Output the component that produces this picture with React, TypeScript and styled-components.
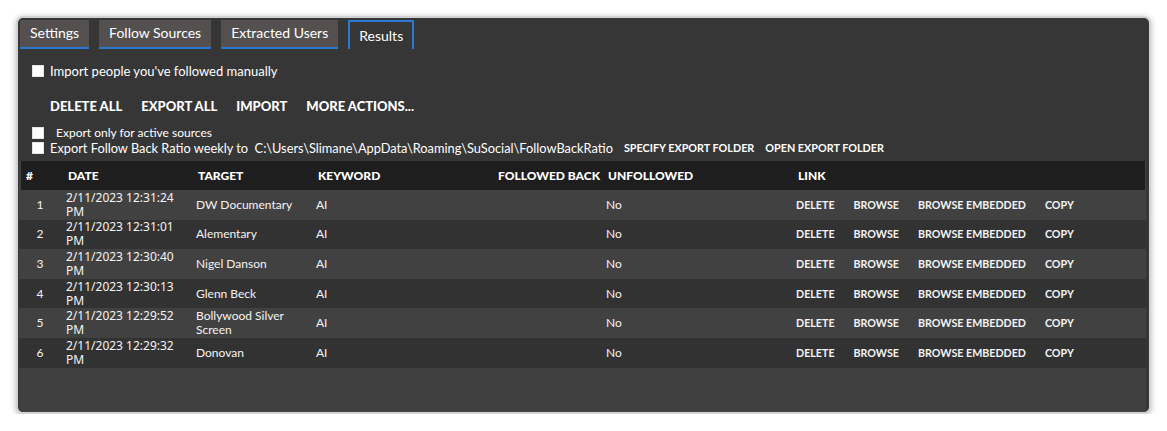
import React from "react"
import styled, { createGlobalStyle } from "styled-components"

const GlobalStyle = createGlobalStyle`
  html, body {
    margin: 0;
    padding: 0;
    background: #ffffff;
  }
  body {
    font-family: "Lato", "Liberation Sans", sans-serif;
    color: #ffffff;
  }
`

const BLUE = "#2c79d4"

type Result = {
  id: number
  date: string
  target: string
  keyword: string
  unfollowed: string
}

const RESULTS: Array<Result> = [
  { id: 1, date: "2/11/2023 12:31:24 PM", target: "DW Documentary", keyword: "AI", unfollowed: "No" },
  { id: 2, date: "2/11/2023 12:31:01 PM", target: "Alementary", keyword: "AI", unfollowed: "No" },
  { id: 3, date: "2/11/2023 12:30:40 PM", target: "Nigel Danson", keyword: "AI", unfollowed: "No" },
  { id: 4, date: "2/11/2023 12:30:13 PM", target: "Glenn Beck", keyword: "AI", unfollowed: "No" },
  { id: 5, date: "2/11/2023 12:29:52 PM", target: "Bollywood Silver Screen", keyword: "AI", unfollowed: "No" },
  { id: 6, date: "2/11/2023 12:29:32 PM", target: "Donovan", keyword: "AI", unfollowed: "No" },
]

const TABS = ["Settings", "Follow Sources", "Extracted Users", "Results"]
const ACTIONS = ["DELETE ALL", "EXPORT ALL", "IMPORT", "MORE ACTIONS..."]
const ROW_LINKS = ["DELETE", "BROWSE", "BROWSE EMBEDDED", "COPY"]
const COLUMNS = "42px 130px 120px 180px 110px 190px 1fr"

export default function App() {
  return (
    <>
      <GlobalStyle />
      <Window>
        <TabBar>
          {TABS.map((tab) => (
            <Tab key={tab} active={tab === "Results"}>
              {tab}
            </Tab>
          ))}
        </TabBar>

        <CheckRow top={14}>
          <Checkbox />
          <CheckLabel>Import people you've followed manually</CheckLabel>
        </CheckRow>

        <ActionBar>
          {ACTIONS.map((action) => (
            <ActionButton key={action}>{action}</ActionButton>
          ))}
        </ActionBar>

        <ExportOptions>
          <CheckRow>
            <Checkbox />
            <SmallLabel>Export only for active sources</SmallLabel>
          </CheckRow>
          <CheckRow>
            <Checkbox />
            <PathLabel>
              Export Follow Back Ratio weekly to&nbsp;
              C:\Users\Slimane\AppData\Roaming\SuSocial\FollowBackRatio
            </PathLabel>
            <FolderLink>SPECIFY EXPORT FOLDER</FolderLink>
            <FolderLink>OPEN EXPORT FOLDER</FolderLink>
          </CheckRow>
        </ExportOptions>

        <Table>
          <HeaderRow>
            <HeadCell>#</HeadCell>
            <HeadCell>DATE</HeadCell>
            <HeadCell>TARGET</HeadCell>
            <HeadCell>KEYWORD</HeadCell>
            <HeadCell>FOLLOWED BACK</HeadCell>
            <HeadCell>UNFOLLOWED</HeadCell>
            <HeadCell>LINK</HeadCell>
          </HeaderRow>
          {RESULTS.map((row, i) => (
            <Row key={row.id} striped={i % 2 === 1}>
              <NumberCell>{row.id}</NumberCell>
              <DateCell>
                <Wrap width={114}>{row.date}</Wrap>
              </DateCell>
              <Cell>
                <Wrap width={104}>{row.target}</Wrap>
              </Cell>
              <Cell>{row.keyword}</Cell>
              <Cell />
              <Cell>{row.unfollowed}</Cell>
              <LinkCell>
                {ROW_LINKS.map((link) => (
                  <RowLink key={link}>{link}</RowLink>
                ))}
              </LinkCell>
            </Row>
          ))}
        </Table>
      </Window>
    </>
  )
}

const Window = styled.div`
  box-sizing: border-box;
  margin: 16px 0 0 16px;
  width: 1135px;
  height: 398px;
  border: 2px solid #d3d3d3;
  border-radius: 7px;
  background: #363636;
  box-shadow: 0 1px 6px rgba(0, 0, 0, 0.28);
  display: flex;
  flex-direction: column;
  overflow: hidden;
`

const TabBar = styled.div`
  display: flex;
  gap: 10px;
  padding: 2px 0 0 2px;
`

const Tab = styled.div<{ active?: boolean }>`
  box-sizing: border-box;
  height: 29px;
  padding: ${({ active }) => (active ? "4px 9px 0" : "3px 10px 0")};
  font-size: 14px;
  line-height: 20px;
  color: #ffffff;
  background: ${({ active }) => (active ? "#363636" : "#54504f")};
  border-style: solid;
  border-color: ${BLUE};
  border-width: ${({ active }) => (active ? "2px 2px 0 2px" : "0 0 2px 0")};
`

const CheckRow = styled.div<{ top?: number }>`
  display: flex;
  align-items: center;
  height: 15px;
  margin-top: ${({ top }) => (top ? `${top}px` : "0")};
  padding-left: 14px;
`

const Checkbox = styled.span`
  box-sizing: border-box;
  width: 12px;
  height: 12px;
  background: #ffffff;
  border: 1px solid #e4e4e4;
  flex-shrink: 0;
`

const CheckLabel = styled.span`
  margin-left: 6px;
  font-size: 13px;
  white-space: nowrap;
`

const SmallLabel = styled.span`
  margin-left: 12px;
  font-size: 12px;
  white-space: nowrap;
`

const PathLabel = styled.span`
  margin-left: 6px;
  font-size: 12.8px;
  white-space: nowrap;
`

const FolderLink = styled.span`
  margin-left: 11px;
  font-size: 10.8px;
  font-weight: 700;
  white-space: nowrap;
`

const ActionBar = styled.div`
  display: flex;
  gap: 19px;
  margin-top: 19px;
  padding-left: 32px;
  height: 18px;
  align-items: center;
`

const ActionButton = styled.span`
  font-size: 13px;
  font-weight: 900;
  white-space: nowrap;
`

const ExportOptions = styled.div`
  display: flex;
  flex-direction: column;
  margin-top: 10px;
`

const Table = styled.div`
  flex: 1;
  margin: 6px 3px 0 1px;
  background: #404040;
  display: flex;
  flex-direction: column;
`

const HeaderRow = styled.div`
  display: grid;
  grid-template-columns: ${COLUMNS};
  height: 29px;
  margin: 0 1px 0 2px;
  background: #1e1e1e;
  align-items: center;
`

const HeadCell = styled.div`
  padding-left: 5px;
  font-size: 12px;
  font-weight: 900;
  white-space: nowrap;
`

const Row = styled.div<{ striped?: boolean }>`
  display: grid;
  grid-template-columns: ${COLUMNS};
  height: 29.6px;
  background: ${({ striped }) => (striped ? "#323232" : "#414141")};
  align-items: center;
`

const Cell = styled.div`
  padding-left: 5px;
  font-size: 12px;
  line-height: 14px;
  color: #f4f4f4;
`

const NumberCell = styled(Cell)`
  padding-left: 0;
  text-align: center;
`

const DateCell = styled(Cell)`
  font-family: "Noto Sans", "Open Sans", sans-serif;
  font-size: 12px;
  line-height: 14px;
`

const Wrap = styled.div<{ width: number }>`
  max-width: ${({ width }) => width}px;
`

const LinkCell = styled(Cell)`
  display: flex;
  gap: 19px;
`

const RowLink = styled.span`
  font-size: 10.7px;
  font-weight: 700;
  white-space: nowrap;
`
